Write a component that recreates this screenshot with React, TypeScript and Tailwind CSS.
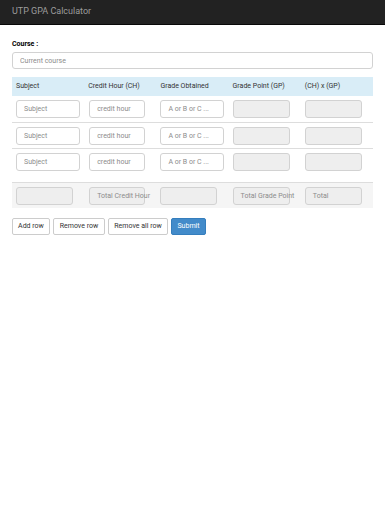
import React from 'react';

const font = { fontFamily: 'Roboto, "Liberation Sans", sans-serif' };

function Field({ placeholder = '', w, ml = 'ml-1' }: { placeholder?: string; w: string; ml?: string }) {
  return (
    <input
      placeholder={placeholder}
      className={`${w} ${ml} block h-[18px] rounded-[3px] border border-[#d2d2d2] bg-white px-[7px] text-[7px] leading-[16px] outline-none placeholder:text-[#8c8c8c]`}
    />
  );
}

// disabled box: text may run past the edge, as in the original
function Locked({ text = '', w, ml = 'ml-1' }: { text?: string; w: string; ml?: string }) {
  return (
    <div className={`${w} ${ml} h-[18px] rounded-[3px] border border-[#d2d2d2] bg-[#eeeeee] px-[7px] text-[7px] leading-[16px] text-[#8c8c8c] whitespace-nowrap`}>
      {text}
    </div>
  );
}

function App() {
  const rows = [0, 1, 2];
  return (
    <div className="min-h-[512px] bg-white text-[#333]" style={font}>
      <div className="h-[25px] bg-[#222222] border-b border-[#080808] flex items-center px-3">
        <span className="text-[9px] text-[#9d9d9d]">UTP GPA Calculator</span>
      </div>

      <div className="px-3 pt-[14px]">
        <div className="text-[7px] leading-[10px] font-bold text-black">Course :</div>
        <input
          placeholder="Current course"
          className="mt-[3px] block h-[17px] w-full rounded-[3px] border border-[#d2d2d2] px-[7px] text-[7px] outline-none placeholder:text-[#8c8c8c]"
        />

        <div className="mt-[8px]">
          <div className="grid grid-cols-5 h-[19px] items-center bg-[#d9edf7] text-[7px] text-[#333]">
            <div className="pl-1">Subject</div>
            <div className="pl-1">Credit Hour (CH)</div>
            <div className="pl-1">Grade Obtained</div>
            <div className="pl-1">Grade Point (GP)</div>
            <div className="pl-1">(CH) x (GP)</div>
          </div>
          {rows.map((r) => (
            <div key={r} className={`grid grid-cols-5 h-[26px] items-center ${r > 0 ? 'border-t border-[#dddddd]' : ''}`}>
              <div><Field placeholder="Subject" w="w-[64px]" /></div>
              <div><Field placeholder="credit hour" w="w-[56px]" ml="ml-[5px]" /></div>
              <div><Field placeholder="A or B or C ..." w="w-[64px]" /></div>
              <div><Locked w="w-[57px]" /></div>
              <div><Locked w="w-[57px]" /></div>
            </div>
          ))}
          <div className="mt-[8px] grid grid-cols-5 h-[26px] items-center bg-[#f5f5f5] border-t border-[#dddddd]">
            <div><Locked w="w-[57px]" /></div>
            <div><Locked text="Total Credit Hour" w="w-[56px]" ml="ml-[5px]" /></div>
            <div><Locked w="w-[57px]" /></div>
            <div><Locked text="Total Grade Point" w="w-[57px]" /></div>
            <div><Locked text="Total" w="w-[57px]" /></div>
          </div>
        </div>

        <div className="mt-[10px] flex gap-[3px] text-[7px]">
          <button className="h-[17px] w-[38px] rounded-[2px] border border-[#cccccc] bg-white text-[#333]">Add row</button>
          <button className="h-[17px] w-[52px] rounded-[2px] border border-[#cccccc] bg-white text-[#333]">Remove row</button>
          <button className="h-[17px] w-[60px] rounded-[2px] border border-[#cccccc] bg-white text-[#333]">Remove all row</button>
          <button className="h-[17px] w-[35px] rounded-[2px] border border-[#357ebd] bg-[#428bca] text-white">Submit</button>
        </div>
      </div>
    </div>
  );
}

export default App;
